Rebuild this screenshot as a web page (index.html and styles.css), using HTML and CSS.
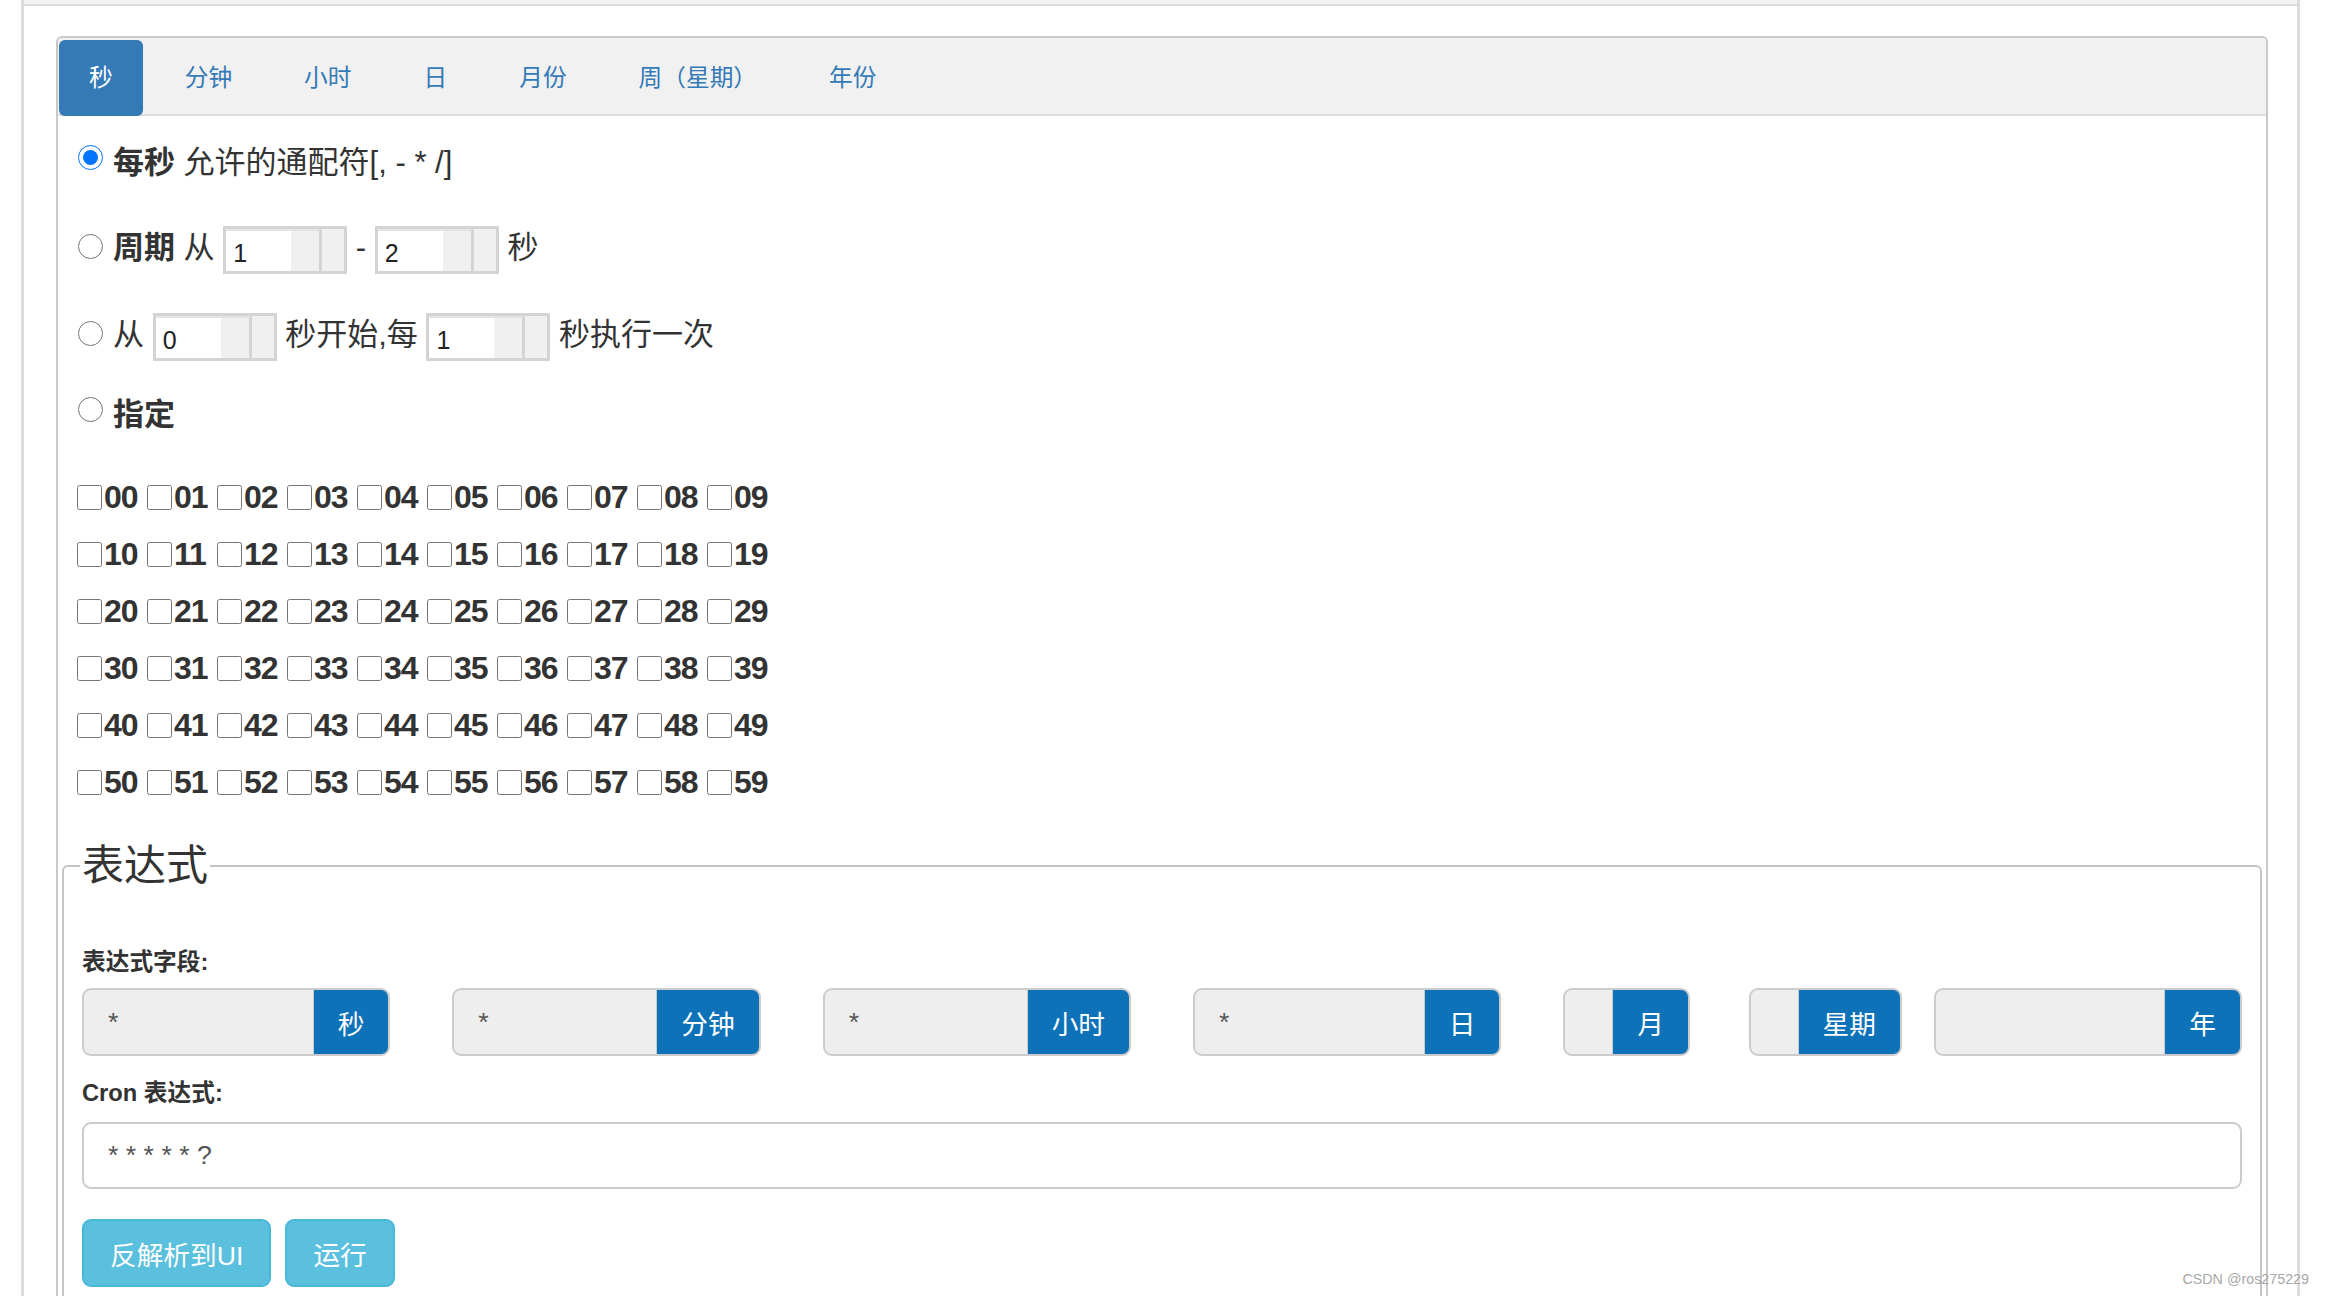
FILE: index.html
```html
<!DOCTYPE html>
<html lang="zh-CN">
<head>
<meta charset="utf-8">
<title>Cron 表达式生成器</title>
<link rel="stylesheet" href="styles.css">
</head>
<body>
<div class="frame">
  <div class="strip"></div>
  <div class="tabbox">
    <ul class="tabbar">
      <li class="tab active">秒</li>
      <li class="tab">分钟</li>
      <li class="tab">小时</li>
      <li class="tab">日</li>
      <li class="tab">月份</li>
      <li class="tab">周（星期）</li>
      <li class="tab">年份</li>
    </ul>
    <div class="pane">
      <label class="opt o1"><input type="radio" name="sec" checked><span class="txt"><b>每秒</b> 允许的通配符[, - * /]</span></label>
      <label class="opt o2"><input type="radio" name="sec"><span class="txt"><b>周期</b> 从 <span class="num"><input class="nf" value="1"></span> - <span class="num"><input class="nf" value="2"></span> 秒</span></label>
      <label class="opt o3"><input type="radio" name="sec"><span class="txt">从 <span class="num"><input class="nf" value="0"></span> 秒开始,每 <span class="num"><input class="nf" value="1"></span> 秒执行一次</span></label>
      <label class="opt o4"><input type="radio" name="sec"><span class="txt"><b>指定</b></span></label>
      <div class="cbs">
        <div class="cbrow"><label class="cb"><input type="checkbox"><span>00</span></label><label class="cb"><input type="checkbox"><span>01</span></label><label class="cb"><input type="checkbox"><span>02</span></label><label class="cb"><input type="checkbox"><span>03</span></label><label class="cb"><input type="checkbox"><span>04</span></label><label class="cb"><input type="checkbox"><span>05</span></label><label class="cb"><input type="checkbox"><span>06</span></label><label class="cb"><input type="checkbox"><span>07</span></label><label class="cb"><input type="checkbox"><span>08</span></label><label class="cb"><input type="checkbox"><span>09</span></label></div>
        <div class="cbrow"><label class="cb"><input type="checkbox"><span>10</span></label><label class="cb"><input type="checkbox"><span>11</span></label><label class="cb"><input type="checkbox"><span>12</span></label><label class="cb"><input type="checkbox"><span>13</span></label><label class="cb"><input type="checkbox"><span>14</span></label><label class="cb"><input type="checkbox"><span>15</span></label><label class="cb"><input type="checkbox"><span>16</span></label><label class="cb"><input type="checkbox"><span>17</span></label><label class="cb"><input type="checkbox"><span>18</span></label><label class="cb"><input type="checkbox"><span>19</span></label></div>
        <div class="cbrow"><label class="cb"><input type="checkbox"><span>20</span></label><label class="cb"><input type="checkbox"><span>21</span></label><label class="cb"><input type="checkbox"><span>22</span></label><label class="cb"><input type="checkbox"><span>23</span></label><label class="cb"><input type="checkbox"><span>24</span></label><label class="cb"><input type="checkbox"><span>25</span></label><label class="cb"><input type="checkbox"><span>26</span></label><label class="cb"><input type="checkbox"><span>27</span></label><label class="cb"><input type="checkbox"><span>28</span></label><label class="cb"><input type="checkbox"><span>29</span></label></div>
        <div class="cbrow"><label class="cb"><input type="checkbox"><span>30</span></label><label class="cb"><input type="checkbox"><span>31</span></label><label class="cb"><input type="checkbox"><span>32</span></label><label class="cb"><input type="checkbox"><span>33</span></label><label class="cb"><input type="checkbox"><span>34</span></label><label class="cb"><input type="checkbox"><span>35</span></label><label class="cb"><input type="checkbox"><span>36</span></label><label class="cb"><input type="checkbox"><span>37</span></label><label class="cb"><input type="checkbox"><span>38</span></label><label class="cb"><input type="checkbox"><span>39</span></label></div>
        <div class="cbrow"><label class="cb"><input type="checkbox"><span>40</span></label><label class="cb"><input type="checkbox"><span>41</span></label><label class="cb"><input type="checkbox"><span>42</span></label><label class="cb"><input type="checkbox"><span>43</span></label><label class="cb"><input type="checkbox"><span>44</span></label><label class="cb"><input type="checkbox"><span>45</span></label><label class="cb"><input type="checkbox"><span>46</span></label><label class="cb"><input type="checkbox"><span>47</span></label><label class="cb"><input type="checkbox"><span>48</span></label><label class="cb"><input type="checkbox"><span>49</span></label></div>
        <div class="cbrow"><label class="cb"><input type="checkbox"><span>50</span></label><label class="cb"><input type="checkbox"><span>51</span></label><label class="cb"><input type="checkbox"><span>52</span></label><label class="cb"><input type="checkbox"><span>53</span></label><label class="cb"><input type="checkbox"><span>54</span></label><label class="cb"><input type="checkbox"><span>55</span></label><label class="cb"><input type="checkbox"><span>56</span></label><label class="cb"><input type="checkbox"><span>57</span></label><label class="cb"><input type="checkbox"><span>58</span></label><label class="cb"><input type="checkbox"><span>59</span></label></div>
      </div>
      <fieldset class="expr">
        <legend>表达式</legend>
        <div class="flabel l1">表达式字段:</div>
        <div class="fields">
          <div class="cell"><div class="ig"><input class="in" readonly value="*"><span class="add">秒</span></div></div>
          <div class="cell"><div class="ig"><input class="in" readonly value="*"><span class="add">分钟</span></div></div>
          <div class="cell"><div class="ig"><input class="in" readonly value="*"><span class="add">小时</span></div></div>
          <div class="cell"><div class="ig"><input class="in" readonly value="*"><span class="add">日</span></div></div>
          <div class="cell"><div class="ig"><input class="in" readonly value=""><span class="add">月</span></div></div>
          <div class="cell"><div class="ig"><input class="in" readonly value=""><span class="add">星期</span></div></div>
          <div class="cell"><div class="ig"><input class="in" readonly value=""><span class="add">年</span></div></div>
        </div>
        <div class="flabel l2">Cron 表达式:</div>
        <input class="cron" value="* * * * * ?">
        <div class="btns">
          <button class="btn">反解析到UI</button>
          <button class="btn">运行</button>
        </div>
      </fieldset>
    </div>
  </div>
</div>
<div class="wm">CSDN @ros275229</div>
</body>
</html>
```

FILE: styles.css
```css
html, body {
  margin: 0;
  height: 100%;
  overflow: hidden;
  background: #fff;
}
body {
  font-family: "Liberation Sans", "Noto Sans CJK SC", sans-serif;
  color: #333;
  position: relative;
}
input, button {
  font-family: "Liberation Sans", "Noto Sans CJK SC", sans-serif;
}
.frame {
  margin: 0 26px 0 21px;
  border-left: 3px solid #ddd;
  border-right: 3px solid #ddd;
  min-height: 100%;
  box-sizing: border-box;
}
.strip {
  height: 4px;
  background: #f2f2f2;
  border-bottom: 2px solid #ddd;
}
.tabbox {
  margin: 30px 29px 0 32px;
  border: 2px solid #ccc8c8;
  border-bottom: none;
  border-radius: 6px 6px 0 0;
}
.tabbar {
  list-style: none;
  margin: 0;
  padding: 2px 0 0 1px;
  height: 74px;
  display: flex;
  align-items: flex-start;
  background: #f1f1f1;
  border-bottom: 2px solid #ddd;
  border-radius: 4px 4px 0 0;
}
.tab {
  height: 76px;
  box-sizing: border-box;
  padding: 0 30px 4px;
  margin-right: 12px;
  display: flex;
  align-items: center;
  font-size: 23.7px;
  color: #337ab7;
  border-radius: 6px;
  white-space: nowrap;
}
.tab.active {
  background: #337ab7;
  color: #fff;
}
.pane {
  padding: 0 19px;
}
.opt {
  display: flex;
  align-items: center;
  height: 48px;
  font-size: 31px;
  color: #333;
  white-space: nowrap;
}
.opt input[type=radio] {
  width: 25px;
  height: 25px;
  margin: -3px 10.5px 0 0.5px;
  flex: none;
}
.o1 { margin-top: 19px; }
.o2 { margin-top: 41px; }
.o3 { margin-top: 39px; }
.o4 { margin-top: 28px; }
.txt b { font-weight: bold; }
.num {
  display: inline-flex;
  vertical-align: middle;
  width: 124px;
  height: 48px;
  box-sizing: border-box;
  border: 3px solid #d4d4d4;
  background: #f0f0f0;
}
.nf {
  width: 96px;
  height: 100%;
  box-sizing: border-box;
  margin: 0;
  border: 0;
  border-top: 2px solid #e4e4e4;
  border-right: 3px solid #d4d4d4;
  background: linear-gradient(90deg, #fff 0, #fff 65px, #f0f0f0 65px);
  font-size: 25px;
  color: #222;
  padding: 6px 0 0 7px;
  outline: none;
}
.cbs { margin-top: 34px; }
.cbrow {
  display: flex;
  height: 57px;
  align-items: center;
}
.cb {
  display: flex;
  align-items: center;
  width: 70px;
  flex: none;
  font-weight: bold;
  font-size: 32px;
  letter-spacing: -1px;
  color: #333;
}
.cb input {
  width: 25px;
  height: 25px;
  margin: 0 2px 0 0;
}
.expr {
  margin: 34px -15px 0;
  border: 2px solid #c4c4c4;
  border-radius: 6px;
  padding: 0 18px 60px;
  min-width: 0;
}
.expr legend {
  font-size: 42px;
  line-height: 42px;
  padding: 0 2px;
  margin-left: -2px;
  color: #333;
}
.flabel {
  font-weight: bold;
  font-size: 23.7px;
  line-height: 34px;
  height: 34px;
  color: #333;
}
.l1 { margin-top: 58px; }
.l2 { margin-top: 20px; }
.fields {
  display: grid;
  grid-template-columns: repeat(4, minmax(0, 2fr)) minmax(0, 1fr) minmax(0, 1fr) minmax(0, 2fr);
  margin: 9px -31px 0;
}
.cell {
  padding: 0 31px;
  min-width: 0;
}
.ig {
  display: flex;
  height: 68px;
}
.ig .in {
  flex: 1 1 0;
  width: 0;
  min-width: 50px;
  box-sizing: border-box;
  margin: 0;
  border: 2px solid #ccc;
  border-right: 1px solid #ccc;
  border-radius: 9px 0 0 9px;
  background: #eee;
  font-size: 26.7px;
  color: #555;
  padding: 0 0 0 24px;
  outline: none;
}
.ig .add {
  flex: none;
  display: flex;
  align-items: center;
  box-sizing: border-box;
  background: #0e72b8;
  color: #fff;
  border: 2px solid #ccc;
  border-left: 0;
  border-radius: 0 9px 9px 0;
  padding: 0 24px;
  font-size: 26.7px;
  white-space: nowrap;
}
.cron {
  display: block;
  margin: 12px 0 0;
  height: 67px;
  width: 100%;
  box-sizing: border-box;
  border: 2px solid #ccc;
  border-radius: 9px;
  padding: 0 24px;
  font-size: 26.7px;
  color: #555;
  background: #fff;
  outline: none;
}
.btns {
  margin-top: 30px;
  display: flex;
  gap: 14px;
}
.btn {
  height: 68px;
  box-sizing: border-box;
  padding: 0 26px;
  border: 2px solid #46b8da;
  background: #5bc0de;
  color: #fff;
  font-size: 26.7px;
  border-radius: 9px;
}
.wm {
  position: absolute;
  right: 17px;
  top: 1271px;
  font-size: 14.3px;
  color: #a8a8a8;
  white-space: nowrap;
}
```
